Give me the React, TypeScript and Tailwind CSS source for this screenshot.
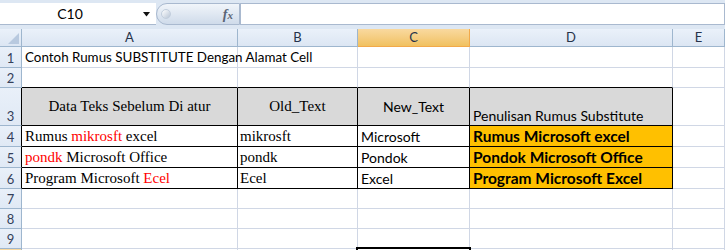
import React from "react";

const cal = { fontFamily: "Lato, 'Open Sans', sans-serif" };
const tnr = { fontFamily: "'Liberation Serif', 'Times New Roman', serif" };

const GRID = "border-[#d0d7e5]";

type CellProps = {
  children?: React.ReactNode;
  className?: string;
  style?: React.CSSProperties;
};

function Cell({ children, className = "", style }: CellProps) {
  return (
    <div className={`border-r border-b flex overflow-visible whitespace-nowrap ${className}`} style={style}>
      {children !== undefined && <span>{children}</span>}
    </div>
  );
}

function RowHead({ n, h, black = false, sel = false }: { n?: number; h: string; black?: boolean; sel?: boolean }) {
  return (
    <div
      className={`${h} flex items-end justify-center border-b border-r text-[13px] leading-[17px] text-[#34405a] ${
        sel
          ? "bg-gradient-to-b from-[#f9d99f] to-[#f1c15f] border-b-[#f2a94a]"
          : "bg-gradient-to-b from-[#e9f0f9] to-[#e0e9f5] border-b-[#9eb6ce]"
      } ${black ? "border-r-black" : "border-r-[#9eb6ce]"}`}
      style={cal}
    >
      {n}
    </div>
  );
}

export default function App() {
  const colHead = (label: string, sel = false) => (
    <div
      className={`h-[18px] flex items-center justify-center border-r border-b text-[13px] text-[#26324a] ${
        sel
          ? "bg-gradient-to-b from-[#f9d99f] to-[#f1c15f] border-r-[#f2a94a] border-b-[#f2a94a]"
          : "bg-gradient-to-b from-[#eaf1fa] to-[#dce6f3] border-r-[#9eb6ce] border-b-[#9eb6ce]"
      }`}
      style={cal}
    >
      {label}
    </div>
  );

  const R = (t: string) => <span className="text-[#ff0000]">{t}</span>;

  return (
    <div className="w-[725px] h-[250px] overflow-hidden bg-[#dfe8f3] relative">
      {/* formula bar */}
      <div className="h-[29px] bg-[#dde7f3] pt-[3px] flex">
        <div className="h-[22px] w-[156px] bg-white border-b border-[#a9b9cf] flex items-center relative">
          <span className="w-[140px] text-center text-[14px] text-black" style={cal}>C10</span>
          <svg className="absolute left-[143px] top-[9px]" width="7" height="5" viewBox="0 0 7 5">
            <path d="M0 0 H7 L3.5 4.5 Z" fill="#111" />
          </svg>
        </div>
        <div className="h-[22px] w-[84px] rounded-l-full bg-gradient-to-b from-[#f1f5fa] to-[#cfdbea] border border-[#a9b9cf] flex items-center justify-between pl-[4px] pr-[6px]">
          <div className="w-[10px] h-[10px] rounded-full bg-gradient-to-br from-[#ffffff] to-[#b9c6d6] border border-[#c2cedd]" />
          <span className="italic text-[14px] text-[#5a6475] font-bold" style={tnr}>
            f<span className="text-[11px]">x</span>
          </span>
        </div>
        <div className="h-[22px] flex-1 bg-white border border-[#a9b9cf]" />
      </div>

      {/* sheet */}
      <div className="grid grid-cols-[22px_216px_120px_112px_203px_52px] bg-white">
        {/* header row */}
        <div className="h-[18px] border-r border-b border-[#9eb6ce] bg-gradient-to-b from-[#eaf1fa] to-[#dce6f3] relative">
          <svg className="absolute right-[2px] bottom-[2px]" width="11" height="11" viewBox="0 0 11 11">
            <path d="M11 0 V11 H0 Z" fill="#b8c9df" />
          </svg>
        </div>
        {colHead("A")}
        {colHead("B")}
        {colHead("C", true)}
        {colHead("D")}
        {colHead("E")}

        {/* row 1 */}
        <RowHead n={1} h="h-[21px]" />
        <Cell className={`${GRID} h-[21px] items-end pl-[3px] text-[13.4px] leading-[19px] text-black`} style={cal}>
          Contoh Rumus SUBSTITUTE Dengan Alamat Cell
        </Cell>
        <Cell className={GRID} />
        <Cell className={GRID} />
        <Cell className={GRID} />
        <Cell className={GRID} />

        {/* row 2 */}
        <RowHead n={2} h="h-[20px]" />
        <Cell className="h-[20px] border-r-[#d0d7e5] border-b-black" />
        <Cell className="border-r-[#d0d7e5] border-b-black" />
        <Cell className="border-r-[#d0d7e5] border-b-black" />
        <Cell className="border-r-[#d0d7e5] border-b-black" />
        <Cell className={GRID} />

        {/* row 3 */}
        <RowHead n={3} h="h-[38px]" black />
        <Cell className="h-[38px] border-black bg-[#d9d9d9] items-center justify-center text-[15px] text-black" style={tnr}>
          Data Teks Sebelum Di atur
        </Cell>
        <Cell className="border-black bg-[#d9d9d9] items-center justify-center text-[15px] text-black" style={tnr}>
          Old_Text
        </Cell>
        <Cell className="border-black bg-[#d9d9d9] items-center justify-center text-[14px] text-black" style={cal}>
          New_Text
        </Cell>
        <Cell className="border-black bg-[#d9d9d9] items-end pl-[3px] text-[14px] leading-[19px] text-black" style={cal}>
          Penulisan Rumus Substitute
        </Cell>
        <Cell className={GRID} />

        {/* rows 4-6 */}
        {[
          { n: 4, a: <>Rumus {R("mikrosft")} excel</>, b: "mikrosft", c: "Microsoft", d: "Rumus Microsoft excel" },
          { n: 5, a: <>{R("pondk")} Microsoft Office</>, b: "pondk", c: "Pondok", d: "Pondok Microsoft Office" },
          { n: 6, a: <>Program Microsoft {R("Ecel")}</>, b: "Ecel", c: "Excel", d: "Program Microsoft Excel" },
        ].map((r) => (
          <React.Fragment key={r.n}>
            <RowHead n={r.n} h="h-[21px]" black />
            <Cell className="h-[21px] border-black items-end pl-[3px] text-[15px] leading-[19px] text-black" style={tnr}>
              {r.a}
            </Cell>
            <Cell className="border-black items-end pl-[2px] text-[15px] leading-[19px] text-black" style={tnr}>
              {r.b}
            </Cell>
            <Cell className="border-black items-end pl-[3px] text-[14px] leading-[19px] text-black" style={cal}>
              {r.c}
            </Cell>
            <Cell className="border-black bg-[#ffc000] items-end pl-[3px] text-[15.5px] leading-[19px] font-bold text-black" style={cal}>
              {r.d}
            </Cell>
            <Cell className={GRID} />
          </React.Fragment>
        ))}

        {/* rows 7-10 */}
        {[7, 8, 9, 10].map((n) => (
          <React.Fragment key={n}>
            <RowHead n={n === 10 ? undefined : n} h="h-[20px]" sel={n === 10} />
            <Cell className={`${GRID} h-[20px]`} />
            <Cell className={GRID} />
            <div className={`border-r border-b ${GRID} relative`}>
              {n === 10 && (
                <div className="absolute -top-[2px] -left-[2px] right-[-2px] h-[22px] border-2 border-black" />
              )}
            </div>
            <Cell className={GRID} />
            <Cell className={GRID} />
          </React.Fragment>
        ))}
      </div>
    </div>
  );
}
